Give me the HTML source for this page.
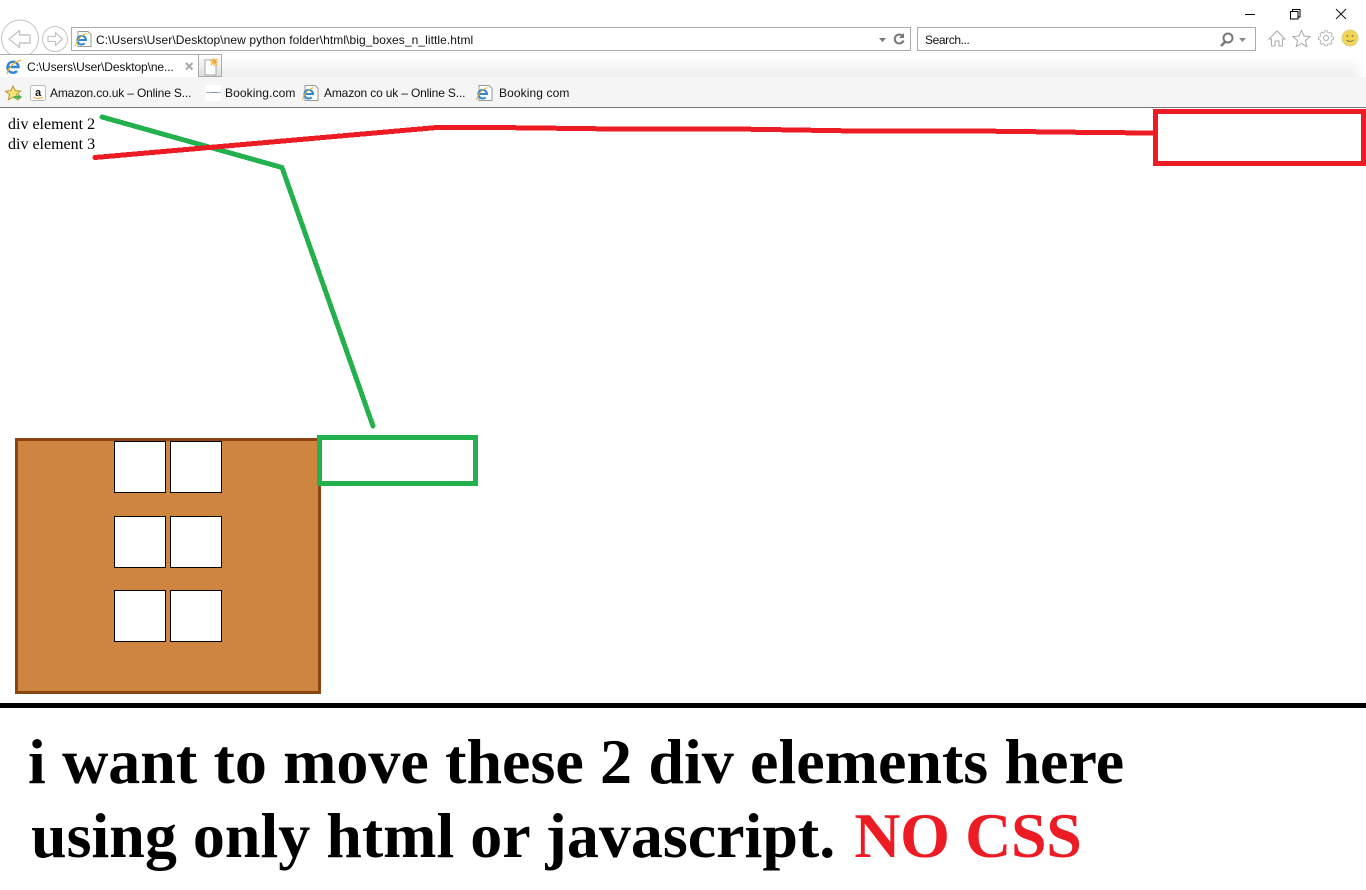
<!DOCTYPE html>
<html><head><meta charset="utf-8"><style>
html,body{margin:0;padding:0;background:#fff;width:1366px;height:890px;overflow:hidden}
.a{position:absolute;box-sizing:border-box}
.t{position:absolute;white-space:nowrap;font:12px/16px "Liberation Sans",sans-serif;color:#111}
.w{position:absolute;box-sizing:border-box;width:52px;height:52px;background:#fff;border:1px solid #000}
.b{position:absolute;white-space:nowrap;font:bold 64px/74px "Liberation Serif",serif;color:#000}
.d{position:absolute;font:16px/18px "Liberation Serif",serif;color:#000;white-space:nowrap}
svg{position:absolute;overflow:visible}
</style></head><body>
<div class="a" style="left:222px;top:57px;width:1144px;height:20px;background:linear-gradient(#fff,#eee)"></div>
<div class="a" style="left:1352px;top:57px;width:14px;height:20px;background:linear-gradient(90deg,rgba(255,255,255,0),#fff)"></div>
<div class="a" style="left:0;top:54px;width:222px;height:1px;background:#aaa"></div>
<div class="a" style="left:0;top:54px;width:199px;height:24px;background:#fff;border-top:1px solid #aaa;border-right:1px solid #aaa"></div>
<div class="a" style="left:199px;top:54px;width:23px;height:23px;background:linear-gradient(#fff,#ddd);border:1px solid #aaa;border-left:0"></div>
<div class="a" style="left:0;top:77px;width:1366px;height:30px;background:#f5f5f5"></div>
<div class="a" style="left:0;top:107px;width:1366px;height:1px;background:#777"></div>
<div class="a" style="left:71px;top:27px;width:840px;height:24px;border:1px solid #aaa;background:#fff"></div>
<div class="a" style="left:917px;top:27px;width:339px;height:24px;border:1px solid #aaa;background:#fff"></div>
<svg style="left:0;top:0" width="1366" height="108" viewBox="0 0 1366 108" fill="none">
<defs><clipPath id="c"><rect x="0" y="0" width="70" height="54"/></clipPath></defs>
<g clip-path="url(#c)"><circle cx="20" cy="38.500" r="18.500" stroke="#c4c4c4" fill="#fff"/></g>
<path d="M30 35H19.500V30.500L9 39l10.500 8.500V43H30z" stroke="#c4c4c4" stroke-width="1.400" stroke-linejoin="round"/>
<circle cx="55" cy="39" r="12.500" stroke="#c4c4c4" fill="#fff"/>
<path d="M48 36.500h7.500V32.500l7 6.500-7 6.500v-4h-7.500z" stroke="#c4c4c4" stroke-width="1.200" stroke-linejoin="round"/>
<path d="M1245 14.500h10" stroke="#000"/>
<rect x="1290.500" y="11.500" width="7.500" height="7.500" stroke="#000"/>
<path d="M1292.500 11.500v-2h7.500v7.500h-2" stroke="#000"/>
<path d="M1336 9l10 10M1346 9l-10 10" stroke="#111"/>
<path d="M879 38h7l-3.500 4z" fill="#777"/>
<path d="M903 36.500a4.500 4.500 0 1 0 .5 4" stroke="#777" stroke-width="2"/>
<path d="M904 33v5h-5z" fill="#777"/>
<circle cx="1228" cy="38" r="4.500" stroke="#777" stroke-width="2"/>
<path d="M1225 42l-4 4" stroke="#777" stroke-width="2.500"/>
<path d="M1239 38h7l-3.500 4z" fill="#888"/>
<path d="M1269 39l8-8 8 8h-2.500v7h-3.500v-5h-4v5h-3.500v-7z" stroke="#aaa"/>
<path d="M1301.500 30.500l2.500 5.500 6 .6-4.500 4 1.300 6-5.300-3.100-5.300 3.100 1.300-6-4.500-4 6-.6z" stroke="#aaa"/>
<circle cx="1326" cy="38" r="2.500" stroke="#aaa"/>
<path d="M1324.500 30.500h3l.5 2 1.700.8 1.900-1 2 2-1 1.900.8 1.700 2 .5v3l-2 .5-.8 1.700 1 1.900-2 2-1.900-1-1.700.8-.5 2h-3l-.5-2-1.700-.8-1.900 1-2-2 1-1.900-.8-1.700-2-.5v-3l2-.5.8-1.700-1-1.900 2-2 1.900 1 1.700-.8z" transform="translate(1326 38) scale(.8) translate(-1326 -38) translate(0 -1.500)" stroke="#aaa"/>
<circle cx="1350" cy="38" r="8" fill="#f2d64f" stroke="#ddd09a"/>
<circle cx="1347.500" cy="36" r=".9" fill="#775"/><circle cx="1352.500" cy="36" r=".9" fill="#775"/>
<path d="M1346.500 40q3.500 3 7 0" stroke="#775"/>
<path d="M186 63l6.500 6.500M192.500 63L186 69.500" stroke="#aaa" stroke-width="2"/>
<path d="M205 60h10l1 2v13h-11z" fill="#fff" stroke="#aaa"/>
<path d="M214 58v8M210 62h8M211 59l6 6M217 59l-6 6" stroke="#f5a623"/>
<path d="M13 86l2.200 4.600 5.300.5-4 3.500 1.200 5.200-4.700-2.700-4.700 2.700 1.200-5.200-4-3.500 5.300-.5z" fill="#f6e27a" stroke="#b59a30"/>
<path d="M14 96h4v-2l4 3-4 3v-2h-4z" fill="#4caf50"/>
<rect x="30.500" y="85.500" width="15" height="15" rx="2" fill="#fff" stroke="#bbb"/>
<text x="38" y="96" font-family="Liberation Sans" font-size="11" font-weight="bold" text-anchor="middle" fill="#111">a</text>
<path d="M33 97q5 3 10 0" stroke="#f39c12"/>
<rect x="205" y="85" width="16" height="16" fill="#fff"/>
<path d="M206 92.500h5" stroke="#9bc"/><path d="M211 92.500h6" stroke="#889"/><path d="M217 92.500h4" stroke="#7ce"/>
<g id="ie"><path d="M78 31.500h10l3 3v12H78z" fill="#fff" stroke="#999"/><path d="M77.500 40h8.500a4.300 4.300 0 1 0-1.300 3.300" stroke="#2b86d6" stroke-width="2"/><path d="M75.500 46q2-9 11-12.500" stroke="#f0b429"/></g>
<use href="#ie" x="227" y="54"/>
<use href="#ie" x="401" y="54"/>
<path d="M8.500 67h10a5.500 5.500 0 1 0-1.500 4" stroke="#2b86d6" stroke-width="2.400"/><path d="M7 74q2-10 14-14" stroke="#f0b429" stroke-width="1.200"/>
</svg>
<div class="t" style="left:96px;top:32px;letter-spacing:.075px">C:\Users\User\Desktop\new python folder\html\big_boxes_n_little.html</div>
<div class="t" style="left:925px;top:32px;letter-spacing:-.4px">Search...</div>
<div class="t" style="left:27px;top:59px;letter-spacing:-.1px">C:\Users\User\Desktop\ne...</div>
<div class="t" style="left:50px;top:85px;letter-spacing:-.16px">Amazon.co.uk – Online S...</div>
<div class="t" style="left:225px;top:85px;letter-spacing:.1px">Booking.com</div>
<div class="t" style="left:324px;top:85px;letter-spacing:-.16px">Amazon co uk – Online S...</div>
<div class="t" style="left:499px;top:85px;letter-spacing:.1px">Booking com</div>
<div class="d" style="left:8px;top:116px">div element 2</div>
<div class="d" style="left:8px;top:136px">div element 3</div>
<div class="a" style="left:15px;top:438px;width:306px;height:256px;background:#cd853f;border:3px solid #8b4513"></div>
<div class="w" style="left:114px;top:441px"></div><div class="w" style="left:170px;top:441px"></div>
<div class="w" style="left:114px;top:516px"></div><div class="w" style="left:170px;top:516px"></div>
<div class="w" style="left:114px;top:590px"></div><div class="w" style="left:170px;top:590px"></div>
<div class="a" style="left:317px;top:435px;width:161px;height:51px;border:5px solid #22b14c;background:#fff"></div>
<div class="a" style="left:1153px;top:109px;width:213px;height:57px;border:5px solid #ed1c24;background:#fff"></div>
<svg style="left:0;top:0" width="1366" height="440" viewBox="0 0 1366 440" fill="none" stroke-linecap="round" stroke-linejoin="round">
<path d="M102 117L282 167.500L373 426" stroke="#22b14c" stroke-width="5" shape-rendering="crispEdges"/>
<path d="M95 157.500L437 127.500H496L616 129H736L856 131H976L1095 132.500L1155 133" stroke="#ed1c24" stroke-width="5" shape-rendering="crispEdges"/>
</svg>
<div class="a" style="left:0;top:703px;width:1366px;height:5px;background:#000"></div>
<div class="b" style="left:28px;top:725px;word-spacing:.3px">i want to move these 2 div elements here</div>
<div class="b" style="left:31px;top:799px">using only html or javascript. <span style="color:#ed1c24;margin-left:3px;letter-spacing:-.35px">NO CSS</span></div>
</body></html>
